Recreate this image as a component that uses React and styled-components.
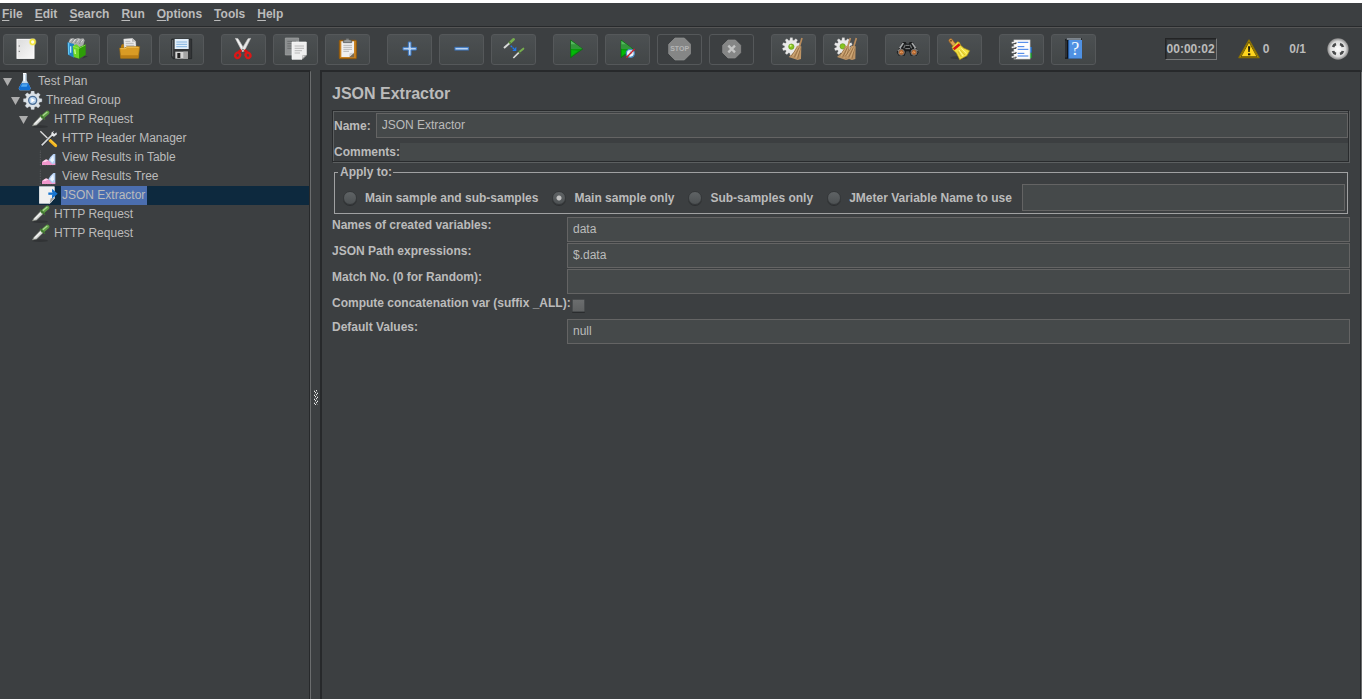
import React, { useState } from "react";
import styled, { createGlobalStyle, css } from "styled-components";

const GlobalStyle = createGlobalStyle`
  *, *::before, *::after { box-sizing: border-box; }
  html, body { margin: 0; padding: 0; }
  body, button, input {
    font-family: "Liberation Sans", Arial, sans-serif;
    font-size: 12px;
    line-height: 16px;
    color: #bbbbbb;
  }
  body { background: #3c3f41; }
`;

const Window = styled.div`
  display: flex;
  flex-direction: column;
  min-height: 100vh;
  border-top: 3px solid #ffffff;
  background: #3c3f41;
`;

const MenuBar = styled.nav`
  display: flex;
  gap: 12px;
  padding: 3px 2px 4px;
  border-bottom: 1px solid #282a2c;
`;

const MenuButton = styled.button`
  padding: 0;
  border: 0;
  background: none;
  font-weight: bold;
  cursor: default;
  u { text-underline-offset: 2px; }
`;

const ToolBar = styled.div`
  display: flex;
  align-items: center;
  justify-content: space-between;
  gap: 17px;
  padding: 6px 13px 5px 3px;
  border-top: 1px solid #555555;
`;

const ToolGroups = styled.div`
  display: flex;
  gap: 17px;
`;

const ToolGroup = styled.div`
  display: flex;
  gap: 7px;
`;

const ToolButton = styled.button`
  display: flex;
  align-items: center;
  justify-content: center;
  width: 45px;
  height: 31px;
  padding: 0 1px 1px 0;
  border: 1px solid #55585a;
  border-radius: 3px;
  background: linear-gradient(#4c5052, #424647);
  &:disabled { background: #3c3f41; }
`;

const Status = styled.div`
  display: flex;
  align-items: center;
  padding-bottom: 2px;
  font-weight: bold;
`;

const Timer = styled.output`
  height: 22px;
  padding: 2px 1px;
  border: 1px solid;
  border-color: #232425 #77797a #77797a #232425;
  box-shadow: inset 1px 1px 0 #2e3032;
`;

const Warnings = styled.span`
  display: flex;
  align-items: center;
  gap: 3px;
  margin: 0 20px 0 21px;
`;

const Threads = styled.span`
  margin-right: 21px;
`;

const Split = styled.div`
  display: flex;
  flex: 1;
`;

const Side = styled.aside`
  flex: none;
  width: 311px;
  border-top: 2px solid #27292b;
  border-right: 1px solid #6b6d6e;
`;

const Tree = styled.ul`
  height: 100%;
  margin: 0;
  padding: 0;
  list-style: none;
  border-right: 1px solid #27292b;
`;

const TreeRow = styled.li`
  display: flex;
  align-items: center;
  height: 19px;
  padding-left: ${(p) => p.$level * 8}px;
  background: ${(p) => (p.$selected ? "#0d293e" : "transparent")};
`;

const Toggle = styled.button`
  display: flex;
  justify-content: center;
  width: 15px;
  padding: 0;
  border: 0;
  background: none;
`;

const ToggleSpace = styled.span`
  width: 15px;
`;

const TreeLabel = styled.span`
  margin-left: 2px;
  padding: 0 2px 0 1px;
  line-height: 19px;
  background: ${(p) => (p.$selected ? "#4b6eaf" : "transparent")};
`;

const Divider = styled.div`
  display: flex;
  align-items: center;
  justify-content: center;
  width: 9px;
  padding-top: 26px;
`;

const Editor = styled.main`
  flex: 1;
  min-width: 0;
  padding: 11px 10px 0;
  border: solid #27292b;
  border-width: 2px 1px 0 2px;
  margin-right: 1px;
  box-shadow: 1px 2px 0 #6b6d6e;
`;

const Title = styled.h1`
  margin: 0 0 5px;
  font-size: 16px;
  line-height: 22px;
`;

const EtchedBox = styled.section`
  display: flex;
  flex-direction: column;
  gap: 5px;
  margin: 0 1px 2px 0;
  padding: 2px 0 0 1px;
  border: 1px solid #292b2d;
  box-shadow: 1px 1px 0 #5c5f60, inset 1px 1px 0 #5c5f60;
`;

const FieldRow = styled.div`
  display: flex;
  align-items: center;
  gap: ${(p) => p.$gap || 0}px;
`;

const Label = styled.label`
  font-weight: bold;
  white-space: nowrap;
`;

const TextField = styled.input`
  flex: 1;
  min-width: 0;
  width: 100%;
  height: ${(p) => p.$height || 25}px;
  padding: 0 5px 2px;
  border: 1px solid #646464;
  border-radius: 0;
  background: #45494a;
  outline: none;
  ${(p) => p.$plain && css`border: 0;`}
`;

const ApplyTo = styled.fieldset`
  min-width: 0;
  margin: 0 2px 3px;
  padding: 4px 2px 2px 3px;
  border: 1px solid #a0a1a2;
`;

const Legend = styled.legend`
  padding: 0 1px 0 2px;
  font-weight: bold;
`;

const Choices = styled.div`
  display: flex;
  align-items: center;
  gap: 14px;
  padding-left: 5px;
`;

const Choice = styled(Label)`
  display: flex;
  align-items: center;
  gap: 8px;
`;

const Variable = styled.div`
  display: flex;
  flex: 1;
  align-items: center;
  gap: 10px;
`;

const Radio = styled.input`
  appearance: none;
  width: 14px;
  height: 14px;
  margin: 0;
  border: 1px solid #35383a;
  border-radius: 50%;
  background: linear-gradient(#5f6365, #4d5153);
  box-shadow: 0 1px 0 #2d2f31;
  &:checked {
    background:
      radial-gradient(circle, #c2c2c2 2px, transparent 3px),
      linear-gradient(#5f6365, #4d5153);
  }
`;

const Grid = styled.section`
  display: grid;
  grid-template-columns: 235px 1fr;
  row-gap: 1px;
`;

const CheckCell = styled.div`
  height: 23px;
  padding: 4px 5px;
`;

const CheckBox = styled.input`
  display: block;
  appearance: none;
  width: 13px;
  height: 13px;
  margin: 0;
  border: 1px solid #494c4e;
  border-radius: 1px;
  background: linear-gradient(#6b6d6e, #5f6162);
  box-shadow: 0 1px 0 #2a2c2e;
  &:checked { background: #a0a1a2; }
`;

function Icon({ children }) {
  return (
    <svg width="24" height="24" viewBox="0 0 72 72" aria-hidden="true">
      {children}
    </svg>
  );
}

function gearPoints(cx, cy, outer, inner, teeth) {
  const points = [];
  const step = (Math.PI * 2) / teeth;
  for (let i = 0; i < teeth; i += 1) {
    [[-0.34, inner], [-0.2, outer], [0.2, outer], [0.34, inner]].forEach(([t, r]) => {
      const a = (i + t) * step;
      points.push(`${(cx + r * Math.sin(a)).toFixed(1)},${(cy - r * Math.cos(a)).toFixed(1)}`);
    });
  }
  return points.join(" ");
}

const NewIcon = () => (
  <Icon>
    <defs>
      <linearGradient id="paper" x1="0" y1="0" x2="1" y2="1">
        <stop offset="0" stopColor="#dcdcdc" /><stop offset="1" stopColor="#f8f8f8" />
      </linearGradient>
    </defs>
    <rect x="12" y="7" width="51" height="57" fill="url(#paper)" stroke="#fff" strokeWidth="3" />
    <path d="M17 27h4M17 43h4" stroke="#777" strokeWidth="3" />
    <circle cx="59" cy="15" r="11" fill="#f5ec6a" opacity=".55" />
    <circle cx="59" cy="15" r="7" fill="#fffde0" stroke="#f1e337" strokeWidth="4" />
  </Icon>
);

const TemplatesIcon = () => (
  <Icon>
    <path d="M10 17L15 5l9-2 6 3 9-3 8 2 8-1 4 6-5 18-20 8-22-10z" fill="#a9abab" />
    <path d="M14 14l7-8M24 17l8-11M35 15l8-9M47 17l7-9" stroke="#e1e1e1" strokeWidth="3" />
    <path d="M19 17l8-10M30 18l8-10M43 21l6-11" stroke="#75797a" strokeWidth="2" />
    <path d="M7 16l20 5v41L9 53z" fill="#1f83c5" />
    <path d="M9 17l4 1v36l-4-2z" fill="#65c6f1" />
    <path d="M17 28v19" stroke="#bceaff" strokeWidth="4" />
    <path d="M58 56l11 2-17 7z" fill="#24282a" opacity=".5" />
    <path d="M23 27l11-5 9 7v36l-17-5z" fill="#6bd526" />
    <path d="M42 31l20-9v32L42 65z" fill="#2d9d08" />
    <path d="M29 37l2 14" stroke="#d3ff99" strokeWidth="4" />
    <path d="M24 28l18 6 19-10" fill="none" stroke="#a5ee62" strokeWidth="2" />
  </Icon>
);

const OpenIcon = () => (
  <Icon>
    <path d="M12 27l3-5h12l5 5h31v30H12z" fill="#b77a0b" />
    <path d="M20 6l26-2 10 9 2 29H22z" fill="#ececec" stroke="#b5b5b5" strokeWidth="1" />
    <path d="M45 4v10h11" fill="#bbb" />
    <path d="M25 13h15M26 19h24M26 25h26M26 31h26" stroke="#9c9c9c" strokeWidth="2" />
    <path d="M8 33h15l7-4h38l-4 35H11z" fill="#d99b24" stroke="#a56f0d" strokeWidth="2" />
    <path d="M10 35h14l7-4h34" fill="none" stroke="#ffd36a" strokeWidth="2" />
    <path d="M12 55h52l-1 8H12z" fill="#b97d15" />
  </Icon>
);

const SaveIcon = () => (
  <Icon>
    <path d="M8 6h60v59H12l-4-5z" fill="#343638" stroke="#202224" strokeWidth="2" />
    <path d="M11 9v49" stroke="#6b6d6f" strokeWidth="3" />
    <rect x="17" y="6" width="42" height="30" fill="#e3effa" />
    <path d="M22 15h32M22 22h32M22 29h32" stroke="#82b2df" strokeWidth="3" />
    <rect x="19" y="44" width="38" height="21" fill="#d5d5d5" />
    <rect x="25" y="48" width="9" height="15" fill="#222" />
    <rect x="43" y="44" width="14" height="21" fill="#a5a5a5" />
  </Icon>
);

const CutIcon = () => (
  <Icon>
    <path d="M13 4l8 1 19 32-6 7z" fill="#f4f4f4" stroke="#c5c5c5" strokeWidth="2" />
    <path d="M59 4l-8 1-19 32 7 7z" fill="#e6e6e6" stroke="#bcbcbc" strokeWidth="2" />
    <path d="M31 39l-9 7M40 39l9 7" stroke="#d61414" strokeWidth="8" />
    <ellipse cx="20" cy="55" rx="7" ry="8" fill="none" stroke="#dc1717" strokeWidth="7" transform="rotate(30 20 55)" />
    <ellipse cx="51" cy="55" rx="7" ry="8" fill="none" stroke="#dc1717" strokeWidth="7" transform="rotate(-30 51 55)" />
    <circle cx="36" cy="38" r="2" fill="#333" />
  </Icon>
);

const CopyIcon = () => (
  <Icon>
    <path d="M7 3h40v51H7z" fill="#8b8e8f" stroke="#a5a7a7" strokeWidth="2" />
    <path d="M13 13h26M13 20h13M13 27h13M13 34h13" stroke="#6b6e6f" strokeWidth="3" />
    <path d="M27 15h43v39L57 67H27z" fill="#efefef" stroke="#fff" strokeWidth="2" />
    <path d="M35 27h28M35 34h28M35 41h22M35 48h16" stroke="#9d9d9d" strokeWidth="2" />
    <path d="M57 67V56l13-2z" fill="#8b8b8b" /><path d="M58 64v-7l8-1z" fill="#ddd" />
  </Icon>
);

const PasteIcon = () => (
  <Icon>
    <rect x="13" y="10" width="51" height="55" rx="2" fill="#c98221" stroke="#925a0c" strokeWidth="3" />
    <path d="M19 13h38v47H19z" fill="#f1f1f1" />
    <path d="M57 47v14H42z" fill="#7b6a51" /><path d="M42 60l2-12 13-1z" fill="#d0d0d0" />
    <path d="M25 25h26M25 31h26M25 37h26M25 43h17" stroke="#9a9a9a" strokeWidth="2" />
    <path d="M25 17v-7l7-1 2-5h7l2 5 7 1v7z" fill="#7e8181" stroke="#515454" strokeWidth="2" />
    <path d="M28 12h19" stroke="#c7c9c9" strokeWidth="2" />
  </Icon>
);

const PlusIcon = () => (
  <Icon>
    <path d="M34 15h8v16h16v8H42v16h-8V39H18v-8h16z" fill="#b9d3f1" stroke="#3c78c3" strokeWidth="3" />
  </Icon>
);

const MinusIcon = () => (
  <Icon>
    <rect x="18" y="31" width="40" height="8" fill="#b9d3f1" stroke="#3c78c3" strokeWidth="3" />
  </Icon>
);

const ToggleIcon = () => (
  <Icon>
    <path d="M9 33l18-16" stroke="#d9dbd9" strokeWidth="6" />
    <path d="M27 17L38 7" stroke="#76ad4e" strokeWidth="8" strokeLinecap="round" />
    <path d="M22 12l10 9" stroke="#3d6631" strokeWidth="3" />
    <path d="M37 63l17-17" stroke="#d9dbd9" strokeWidth="5" />
    <path d="M55 45l12-10" stroke="#76ad4e" strokeWidth="6" strokeLinecap="round" />
    <path d="M51 41l9 9" stroke="#486f39" strokeWidth="3" />
    <path d="M29 26l12 12" stroke="#2078ee" strokeWidth="4" strokeDasharray="6 2" />
    <path d="M46 29v13H34z" fill="#2078ee" />
  </Icon>
);

const PlayShape = ({ x }) => (
  <>
    <path d={`M${x} 9v53l36-26z`} fill="#079a0b" stroke="#096b0d" strokeWidth="2" />
    <path d={`M${x + 1} 11v24h33z`} fill="#55b760" />
    <path d={`M${x + 1} 22v13h33l-18-13z`} fill="#157b1b" opacity=".55" />
    <path d={`M${x + 2} 39v18l20-15z`} fill="#00c905" opacity=".7" />
  </>
);

const StartIcon = () => <Icon><PlayShape x={23} /></Icon>;

const StartNoPausesIcon = () => (
  <Icon>
    <PlayShape x={18} />
    <circle cx="46" cy="49" r="12" fill="#e9f3fb" stroke="#4a8ac1" strokeWidth="4" />
    <path d="M46 41v8h6" fill="none" stroke="#7da7c8" strokeWidth="2" />
    <path d="M34 62l25-26" stroke="#cc2029" strokeWidth="4" />
  </Icon>
);

const StopIcon = () => (
  <Icon>
    <path d="M24 3h28l19 19v28L52 69H24L5 50V22z" fill="#858686" stroke="#939494" strokeWidth="2" />
    <text x="38" y="43" textAnchor="middle" fontFamily="Liberation Sans, sans-serif" fontWeight="bold" fontSize="21" fill="#b4b5b5">STOP</text>
  </Icon>
);

const ShutdownIcon = () => (
  <Icon>
    <path d="M27 9h22l16 16v22L49 63H27L11 47V25z" fill="#858686" stroke="#929393" strokeWidth="2" />
    <path d="M28 26l20 20M48 26L28 46" stroke="#c3c4c4" strokeWidth="7" />
  </Icon>
);

const Broom = ({ dx = 0 }) => (
  <g transform={`translate(${dx} 0)`}>
    <path d="M63 3l-8 27" stroke="#b88b5c" strokeWidth="5" />
    <path d="M48 26l13 2-1 38-10 3-27-9 13-11z" fill="#bd9465" />
    <path d="M50 31L30 58M54 32L40 61M58 33l-8 32" stroke="#8a6439" strokeWidth="2" />
    <path d="M52 29L35 57M57 33l-12 29" stroke="#e0bb88" strokeWidth="2" />
  </g>
);

const ClearIcon = () => (
  <Icon>
    <polygon points={gearPoints(31, 29, 27, 20, 10)} fill="#e9e9e9" stroke="#c6c6c6" />
    <circle cx="31" cy="29" r="8" fill="#86c51f" stroke="#5e9419" strokeWidth="2" />
    <circle cx="29" cy="26" r="3" fill="#d9f58c" />
    <Broom />
  </Icon>
);

const ClearAllIcon = () => (
  <Icon>
    <polygon points={gearPoints(31, 29, 27, 20, 10)} fill="#e9e9e9" stroke="#c6c6c6" />
    <circle cx="29" cy="28" r="8" fill="#86c51f" stroke="#5e9419" strokeWidth="2" />
    <Broom dx={-11} />
    <Broom dx={7} />
  </Icon>
);

const SearchIcon = () => (
  <Icon>
    <path d="M14 30l8-15h10l3 5h6l3-5h10l8 15 9 16-6 10H47l-5-13h-8l-5 13H11L5 46z" fill="#191b1c" />
    <path d="M14 34l11-16M62 34L51 18M9 42l10-6M67 42l-10-6" stroke="#a3a6a7" strokeWidth="5" />
    <path d="M26 34l5-11M50 34l-5-11" stroke="#6d7071" strokeWidth="4" />
    <path d="M33 25h10M31 35h14" stroke="#8b8e8f" strokeWidth="3" />
    <circle cx="19" cy="46" r="9" fill="#b2642c" stroke="#6f7172" strokeWidth="3" />
    <circle cx="57" cy="46" r="9" fill="#b2642c" stroke="#6f7172" strokeWidth="3" />
    <path d="M14 48q4-7 9-1M52 48q4-7 9-1" fill="none" stroke="#f0b079" strokeWidth="3" />
  </Icon>
);

const ResetSearchIcon = () => (
  <Icon>
    <ellipse cx="36" cy="62" rx="26" ry="5" fill="#25282a" opacity=".4" />
    <path d="M11 11l12 15" stroke="#9d6428" strokeWidth="13" strokeLinecap="round" />
    <path d="M11 10l12 16" stroke="#dba457" strokeWidth="8" strokeLinecap="round" />
    <circle cx="12" cy="11" r="3" fill="#7b5121" />
    <path d="M15 31L32 14l5 2 4 9 9 8 18 8-8 15-22 12-10-20-10-10z" fill="#f2df3f" stroke="#a88e17" strokeWidth="2" />
    <path d="M33 43l10 17M39 38l15 16" stroke="#c7ac22" strokeWidth="2" />
    <path d="M36 39l12 18M43 34l16 15" stroke="#fff894" strokeWidth="3" />
    <path d="M20 37l18-15" stroke="#d31616" strokeWidth="8" />
  </Icon>
);

const FunctionIcon = () => (
  <Icon>
    <path d="M60 30h8v17h-8z" fill="#1b75e2" /><path d="M60 48h8v15h-8z" fill="#12a526" />
    <rect x="15" y="9" width="48" height="57" fill="#fdfdfd" stroke="#d5d5d5" strokeWidth="2" />
    <path d="M26 16h32M26 29h20M26 37h32M26 49h20M26 57h32" stroke="#3779e6" strokeWidth="3" />
    {[17, 31, 46, 60].map((y) => (
      <g key={y}>
        <path d={`M8 ${y}h13`} stroke="#e7e7e7" strokeWidth="5" />
        <path d={`M13 ${y + 3}h8v-4`} fill="none" stroke="#333" strokeWidth="3" />
      </g>
    ))}
  </Icon>
);

const HelpIcon = () => (
  <Icon>
    <path d="M12 8l5-4h45v61H12z" fill="#101418" />
    <rect x="23" y="9" width="40" height="56" fill="#4f91e3" />
    <path d="M17 6h43" stroke="#dce8f4" strokeWidth="3" />
    <path d="M15 10v52" stroke="#4a4d51" strokeWidth="3" />
    <path d="M23 10v55" stroke="#255da8" strokeWidth="3" />
    <text x="43" y="54" textAnchor="middle" fontFamily="Liberation Serif, serif" fontSize="54" fill="#f4faff">?</text>
  </Icon>
);

const WarningIcon = () => (
  <svg width="22" height="20" viewBox="0 0 66 60" aria-hidden="true">
    <path d="M33 3L3 56h60z" fill="#f5c913" stroke="#8c7200" strokeWidth="4" strokeLinejoin="round" />
    <path d="M33 9L9 53h48z" fill="#ffd51d" stroke="#2a2300" strokeWidth="2" />
    <path d="M30 22h7l-2 17h-4z" fill="#1c1a0c" /><rect x="30" y="43" width="7" height="6" fill="#1c1a0c" />
  </svg>
);

const RemoteIcon = () => (
  <svg width="22" height="22" viewBox="0 0 66 66" aria-hidden="true">
    <defs>
      <radialGradient id="orb"><stop offset="0" stopColor="#fff" /><stop offset=".7" stopColor="#dedede" /><stop offset="1" stopColor="#898989" /></radialGradient>
    </defs>
    <circle cx="33" cy="33" r="32" fill="url(#orb)" />
    <path d="M18 27q3-7 9-9M39 18q7 2 9 9M48 39q-2 7-9 9M27 48q-7-2-9-9" fill="none" stroke="#484a4b" strokeWidth="8" />
  </svg>
);

const TreeSvg = ({ children }) => (
  <svg width="20" height="19" viewBox="0 0 60 57" aria-hidden="true">{children}</svg>
);

const FlaskIcon = () => (
  <TreeSvg>
    <path d="M24 5h11v20l12 24-3 6H14l-3-6 13-24z" fill="#c6d9e9" />
    <path d="M19 34h21l7 15-3 6H14l-3-6z" fill="#126fd2" />
    <path d="M21 37h17l-3 7H18z" fill="#51a7f0" />
    <path d="M24 5h10M28 8v20" stroke="#fff" strokeWidth="4" />
  </TreeSvg>
);

const ThreadIcon = () => (
  <TreeSvg>
    <polygon points={gearPoints(29, 28, 28, 21, 8)} fill="#dce2e7" stroke="#b6bfc7" />
    <circle cx="29" cy="28" r="12" fill="#b9d4f0" stroke="#4c6f97" strokeWidth="4" />
    <path d="M25 21v14l11-7z" fill="#fff" />
  </TreeSvg>
);

const DropperIcon = () => (
  <TreeSvg>
    <ellipse cx="27" cy="50" rx="24" ry="4" fill="#25282a" opacity=".5" />
    <path d="M4 48l5-9 21-22 8 8-21 20z" fill="#d9dbd9" stroke="#74786f" strokeWidth="2" />
    <path d="M12 41l20-20" stroke="#fff" strokeWidth="3" />
    <path d="M35 20L49 8" stroke="#5d9c43" strokeWidth="12" strokeLinecap="round" />
    <path d="M37 16L48 7" stroke="#a8d690" strokeWidth="4" strokeLinecap="round" />
    <path d="M27 14l15 15" stroke="#3f7232" strokeWidth="4" />
  </TreeSvg>
);

const ToolsIcon = () => (
  <TreeSvg>
    <path d="M4 7l27 26" stroke="#dedede" strokeWidth="4" />
    <path d="M33 34l17 16" stroke="#f3b51d" strokeWidth="9" strokeLinecap="round" />
    <path d="M34 33l17 15" stroke="#ffdd55" strokeWidth="2" />
    <path d="M42 16L7 50" stroke="#242628" strokeWidth="8" />
    <path d="M43 14L8 49" stroke="#d7dadd" strokeWidth="5" />
    <path d="M45 5l-8 6 1 9 7 3 9-7-2-6-6 5-4-4z" fill="#e4e6e8" />
  </TreeSvg>
);

const ResultsIcon = () => (
  <TreeSvg>
    <path d="M4 8v42M4 51h46" stroke="#77797b" strokeWidth="2" strokeDasharray="2 3" />
    <path d="M9 51V43l12-8 10 3 7 7h11v6z" fill="#f197cc" />
    <path d="M9 41l12-7 8 3-10 5z" fill="#ffd4ec" />
    <path d="M28 37l6-10 9-9h6v28l-9 3z" fill="#b3cef2" />
    <path d="M33 36l10-15 2 16-5 7z" fill="#edf6ff" />
  </TreeSvg>
);

const ExtractorIcon = () => (
  <TreeSvg>
    <path d="M1 2h45v35L33 52H1z" fill="#f0f0f0" stroke="#fff" strokeWidth="2" />
    <path d="M32 52l3-15 11-1z" fill="#9a9a9a" />
    <path d="M28 23h20" stroke="#1674d1" strokeWidth="7" />
    <path d="M39 8l17 15-17 15V28l5-5-5-5z" fill="#1674d1" />
  </TreeSvg>
);

const Arrow = () => (
  <svg width="9" height="8" viewBox="0 0 18 16" aria-hidden="true"><path d="M0 0h18L9 16z" fill="#adadad" /></svg>
);

const GRIP_ROWS = Array.from({ length: 15 }, (_, y) => y);

const Grip = () => (
  <svg width="4" height="15" viewBox="0 0 4 15" shapeRendering="crispEdges" aria-hidden="true">
    {GRIP_ROWS.map((y) => {
      const x = [2, 0, 1, 3][y % 4];
      return (
        <g key={y}>
          <rect x={x} y={y} width="1" height="1" fill="#e8e8e8" />
          <rect x={(x + 2) % 4} y={y} width="1" height="1" fill="#6d6f70" />
        </g>
      );
    })}
  </svg>
);

const MENUS = ["File", "Edit", "Search", "Run", "Options", "Tools", "Help"];

const TOOLS = [
  [["New", NewIcon], ["Templates", TemplatesIcon], ["Open", OpenIcon], ["Save", SaveIcon]],
  [["Cut", CutIcon], ["Copy", CopyIcon], ["Paste", PasteIcon]],
  [["Expand All", PlusIcon], ["Collapse All", MinusIcon], ["Toggle", ToggleIcon]],
  [["Start", StartIcon], ["Start no pauses", StartNoPausesIcon], ["Stop", StopIcon, true], ["Shutdown", ShutdownIcon, true]],
  [["Clear", ClearIcon], ["Clear All", ClearAllIcon]],
  [["Search", SearchIcon], ["Reset Search", ResetSearchIcon]],
  [["Function Helper", FunctionIcon], ["Help", HelpIcon]],
];

const NODES = [
  { level: 0, name: "Test Plan", Glyph: FlaskIcon, open: true },
  { level: 1, name: "Thread Group", Glyph: ThreadIcon, open: true },
  { level: 2, name: "HTTP Request", Glyph: DropperIcon, open: true },
  { level: 3, name: "HTTP Header Manager", Glyph: ToolsIcon },
  { level: 3, name: "View Results in Table", Glyph: ResultsIcon },
  { level: 3, name: "View Results Tree", Glyph: ResultsIcon },
  { level: 3, name: "JSON Extractor", Glyph: ExtractorIcon },
  { level: 2, name: "HTTP Request", Glyph: DropperIcon },
  { level: 2, name: "HTTP Request", Glyph: DropperIcon },
];

const SCOPES = ["Main sample and sub-samples", "Main sample only", "Sub-samples only"];

export default function App() {
  const [selected, setSelected] = useState(6);
  const [scope, setScope] = useState(1);

  return (
    <>
      <GlobalStyle />
      <Window>
        <MenuBar>
          {MENUS.map((name) => (
            <MenuButton key={name} type="button"><u>{name[0]}</u>{name.slice(1)}</MenuButton>
          ))}
        </MenuBar>
        <ToolBar role="toolbar">
          <ToolGroups>
            {TOOLS.map((group) => (
              <ToolGroup key={group[0][0]}>
                {group.map(([name, Glyph, disabled]) => (
                  <ToolButton key={name} type="button" aria-label={name} disabled={disabled}>
                    <Glyph />
                  </ToolButton>
                ))}
              </ToolGroup>
            ))}
          </ToolGroups>
          <Status>
            <Timer>00:00:02</Timer>
            <Warnings><WarningIcon />0</Warnings>
            <Threads>0/1</Threads>
            <RemoteIcon />
          </Status>
        </ToolBar>
        <Split>
          <Side>
            <Tree role="tree">
              {NODES.map(({ level, name, Glyph, open }, i) => (
                <TreeRow
                  key={i}
                  role="treeitem"
                  aria-selected={i === selected}
                  $level={level}
                  $selected={i === selected}
                  onClick={() => setSelected(i)}
                >
                  {open ? <Toggle type="button" aria-label="Collapse"><Arrow /></Toggle> : <ToggleSpace />}
                  <Glyph />
                  <TreeLabel $selected={i === selected}>{name}</TreeLabel>
                </TreeRow>
              ))}
            </Tree>
          </Side>
          <Divider role="separator"><Grip /></Divider>
          <Editor>
            <Title>JSON Extractor</Title>
            <EtchedBox>
              <FieldRow $gap={5}>
                <Label htmlFor="name">Name:</Label>
                <TextField id="name" defaultValue="JSON Extractor" />
              </FieldRow>
              <FieldRow>
                <Label htmlFor="comments">Comments:</Label>
                <TextField id="comments" $plain $height={18} />
              </FieldRow>
            </EtchedBox>
            <ApplyTo>
              <Legend>Apply to:</Legend>
              <Choices>
                {SCOPES.map((name, i) => (
                  <Choice key={name}>
                    <Radio type="radio" name="scope" checked={scope === i} onChange={() => setScope(i)} />
                    {name}
                  </Choice>
                ))}
                <Variable>
                  <Choice>
                    <Radio type="radio" name="scope" checked={scope === 3} onChange={() => setScope(3)} />
                    JMeter Variable Name to use
                  </Choice>
                  <TextField aria-label="JMeter variable name" $height={27} />
                </Variable>
              </Choices>
            </ApplyTo>
            <Grid>
              <Label htmlFor="names">Names of created variables:</Label>
              <TextField id="names" defaultValue="data" />
              <Label htmlFor="paths">JSON Path expressions:</Label>
              <TextField id="paths" defaultValue="$.data" />
              <Label htmlFor="match">Match No. (0 for Random):</Label>
              <TextField id="match" />
              <Label htmlFor="concat">Compute concatenation var (suffix _ALL):</Label>
              <CheckCell><CheckBox id="concat" type="checkbox" /></CheckCell>
              <Label htmlFor="defaults">Default Values:</Label>
              <TextField id="defaults" defaultValue="null" />
            </Grid>
          </Editor>
        </Split>
      </Window>
    </>
  );
}
